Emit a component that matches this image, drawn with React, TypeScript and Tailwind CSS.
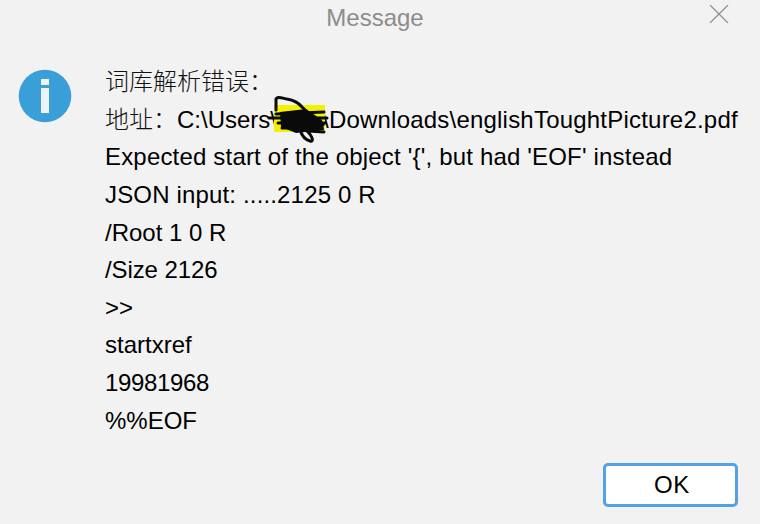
const LINES = [
  { text: "Expected start of the object '{', but had 'EOF' instead", cls: "tracking-[0.18px]" },
  { text: "JSON input: .....2125 0 R", cls: "tracking-[0.16px]" },
  { text: "/Root 1 0 R", cls: "" },
  { text: "/Size 2126", cls: "tracking-[-0.1px]" },
  { text: ">>", cls: "" },
  { text: "startxref", cls: "" },
  { text: "19981968", cls: "tracking-[-0.35px]" },
  { text: "%%EOF", cls: "" },
];

const App = () => {
  return (
    <div className="relative flex h-[524px] w-[760px] flex-col overflow-hidden bg-[#f2f2f2] font-['Liberation_Sans','Noto_Sans_CJK_SC',sans-serif]">
      {/* title bar */}
      <div className="relative flex h-[36px] shrink-0 items-center justify-center pr-[10px] text-[24px] text-[#8c8c8c]">
        Message
        <svg className="absolute left-[709px] top-[5px]" width="20" height="18" viewBox="0 0 20 18">
          <path d="M1 0 L19 18 M19 0 L1 18" stroke="#8a8a8a" strokeWidth="1.2" fill="none" />
        </svg>
      </div>

      {/* body */}
      <div className="flex flex-1 pl-[18px] pt-[27.3px]">
        <svg className="mt-[6px] shrink-0" width="54" height="54" viewBox="0 0 54 54">
          <circle cx="27" cy="27" r="26.3" fill="#3a9fd8" />
          <rect x="23" y="10" width="8" height="6" fill="#eef3f6" />
          <rect x="23" y="19" width="8" height="25" fill="#eef3f6" />
        </svg>
        <div className="ml-[33px] whitespace-pre text-[24px] leading-[37.6px] text-black">
          <div className="font-light text-[#111111]">词库解析错误：</div>
          <div>
            <span className="font-light text-[#111111]">地址：</span>
            C:\Users\
            <span className="inline-block w-[45px]" />
            <span className="tracking-[0.21px]">\Downloads\englishToughtPicture2.pdf</span>
          </div>
          {LINES.map((line) => (
            <div key={line.text} className={line.cls}>
              {line.text}
            </div>
          ))}
        </div>
      </div>

      {/* footer */}
      <div className="flex shrink-0 justify-end pb-[17px] pr-[22px]">
        <button className="h-[44px] w-[135px] rounded-[5px] border-[3px] border-[#55a1e8] bg-white pl-[3px] text-[24px] tracking-[0.6px] text-black">
          OK
        </button>
      </div>

      {/* redaction scribble */}
      <svg className="absolute left-[260px] top-[90px]" width="80" height="60" viewBox="0 0 80 60">
        <rect x="14" y="15" width="51" height="27" fill="#f2f200" />
        <path
          d="M16 20 L16 9 C17 6 22 8 27 9 C33 10 38 12 42 17 C48 23 55 30 63 35 M9 28 L67 28 M16 24 L64 22 M18 33 L65 33 M22 38 L62 38 L48 41 L64 42 M40 40 C42 46 46 50 50 51 C54 52 53 47 47 41"
          stroke="#0a0a0a"
          strokeWidth="3"
          strokeLinecap="round"
          strokeLinejoin="round"
          fill="none"
        />
        <path d="M20 22 L46 19 L62 30 L64 40 L36 43 L21 37 Z" fill="#0a0a0a" />
      </svg>
    </div>
  );
};

export default App;
